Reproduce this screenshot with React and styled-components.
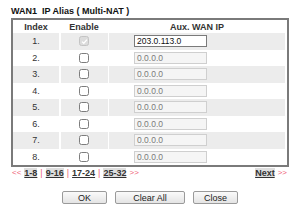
import React from "react";
import styled, { createGlobalStyle } from "styled-components";

const Global = createGlobalStyle`
  html, body { margin: 0; padding: 0; background: #fff; }
  body { font-family: "Liberation Sans", Arial, sans-serif; }
`;

const Page = styled.div`
  width: 300px;
  height: 221px;
  box-sizing: border-box;
  padding: 6px 11px 0 11px;
  overflow: hidden;
`;

const Title = styled.div`
  font-size: 9px;
  line-height: 11px;
  font-weight: bold;
  color: #111;
  white-space: pre;
`;

const TableBox = styled.div`
  width: 278px;
  box-sizing: border-box;
  margin-top: 1px;
  border: 2px solid #7a7a7a;
  padding: 0 2px 0 0;
`;

const Row = styled.div`
  display: grid;
  grid-template-columns: 46px 47px 1fr;
  column-gap: 1.5px;
  height: ${(p) => (p.$header ? "13px" : "16.5px")};
  align-items: stretch;
`;

const Cell = styled.div`
  display: flex;
  align-items: center;
  justify-content: center;
  background: ${(p) => (p.$shade ? "#ececec" : "#fff")};
  font-size: 9px;
  font-weight: ${(p) => (p.$bold ? "bold" : "normal")};
  color: #333;
`;

const Box = styled.span`
  width: 10px;
  height: 10px;
  box-sizing: border-box;
  border-radius: 2.5px;
  border: 1px solid ${(p) => (p.$checked ? "#c4c4c4" : "#7d7d7d")};
  background: ${(p) => (p.$checked ? "#dcdcdc" : "#fff")};
  display: flex;
  align-items: center;
  justify-content: center;
`;

const IpInput = styled.div`
  width: 73px;
  height: 12px;
  box-sizing: border-box;
  border: 1px solid ${(p) => (p.$active ? "#7a7a7a" : "#cfcfcf")};
  background: ${(p) => (p.$active ? "#fff" : "#f5f5f5")};
  color: ${(p) => (p.$active ? "#111" : "#7a7a7a")};
  font-size: 8.5px;
  line-height: 10px;
  padding-left: 2px;
  margin-right: 53px;
`;

const LinkRow = styled.div`
  display: flex;
  justify-content: space-between;
  align-items: center;
  width: 278px;
  padding: 0 2px 0 1px;
  box-sizing: border-box;
  height: 11px;
  font-size: 9px;
  font-weight: bold;
`;

const Pages = styled.div`
  display: flex;
  align-items: center;
  gap: 3px;
`;

const Arrow = styled.span`
  color: #ef5f78;
  font-weight: normal;
  font-size: 8px;
`;

const Sep = styled.span`
  color: #ef5f78;
  font-weight: normal;
`;

const PageLink = styled.span`
  color: #333;
  text-decoration: underline;
  background: ${(p) => (p.$hl ? "#dedede" : "transparent")};
`;

const Buttons = styled.div`
  display: flex;
  justify-content: center;
  gap: 8px;
  margin-top: 13px;
  margin-left: -11px;
  width: 300px;
`;

const Button = styled.div`
  width: ${(p) => p.$w}px;
  height: 13px;
  box-sizing: border-box;
  border: 1px solid #9a9a9a;
  border-radius: 2px;
  background: linear-gradient(#fafafa, #e4e4e4);
  font-size: 9px;
  color: #222;
  display: flex;
  align-items: center;
  justify-content: center;
`;

const Check = () => (
  <svg width="7" height="7" viewBox="0 0 7 7">
    <path d="M1 3.6 L2.8 5.3 L6 1.6" fill="none" stroke="#fff" strokeWidth="1.3" />
  </svg>
);

const rows = Array.from({ length: 8 }, (_, i) => i + 1);

export default function App() {
  return (
    <>
      <Global />
      <Page>
        <Title>WAN1  IP Alias ( Multi-NAT )</Title>
        <TableBox>
          <Row $header>
            <Cell $bold>Index</Cell>
            <Cell $bold>Enable</Cell>
            <Cell $bold>Aux. WAN IP</Cell>
          </Row>
          {rows.map((n) => {
            const shade = n % 2 === 1;
            const first = n === 1;
            return (
              <Row key={n}>
                <Cell $shade={shade}>{n}.</Cell>
                <Cell $shade={shade}>
                  <Box $checked={first}>{first && <Check />}</Box>
                </Cell>
                <Cell $shade={shade}>
                  <IpInput $active={first}>{first ? "203.0.113.0" : "0.0.0.0"}</IpInput>
                </Cell>
              </Row>
            );
          })}
        </TableBox>
        <LinkRow>
          <Pages>
            <Arrow>&lt;&lt;</Arrow>
            <PageLink $hl>1-8</PageLink>
            <Sep>|</Sep>
            <PageLink $hl>9-16</PageLink>
            <Sep>|</Sep>
            <PageLink>17-24</PageLink>
            <Sep>|</Sep>
            <PageLink $hl>25-32</PageLink>
            <Arrow>&gt;&gt;</Arrow>
          </Pages>
          <Pages>
            <PageLink $hl>Next</PageLink>
            <Arrow>&gt;&gt;</Arrow>
          </Pages>
        </LinkRow>
        <Buttons>
          <Button $w={45}>OK</Button>
          <Button $w={70}>Clear All</Button>
          <Button $w={45}>Close</Button>
        </Buttons>
      </Page>
    </>
  );
}
